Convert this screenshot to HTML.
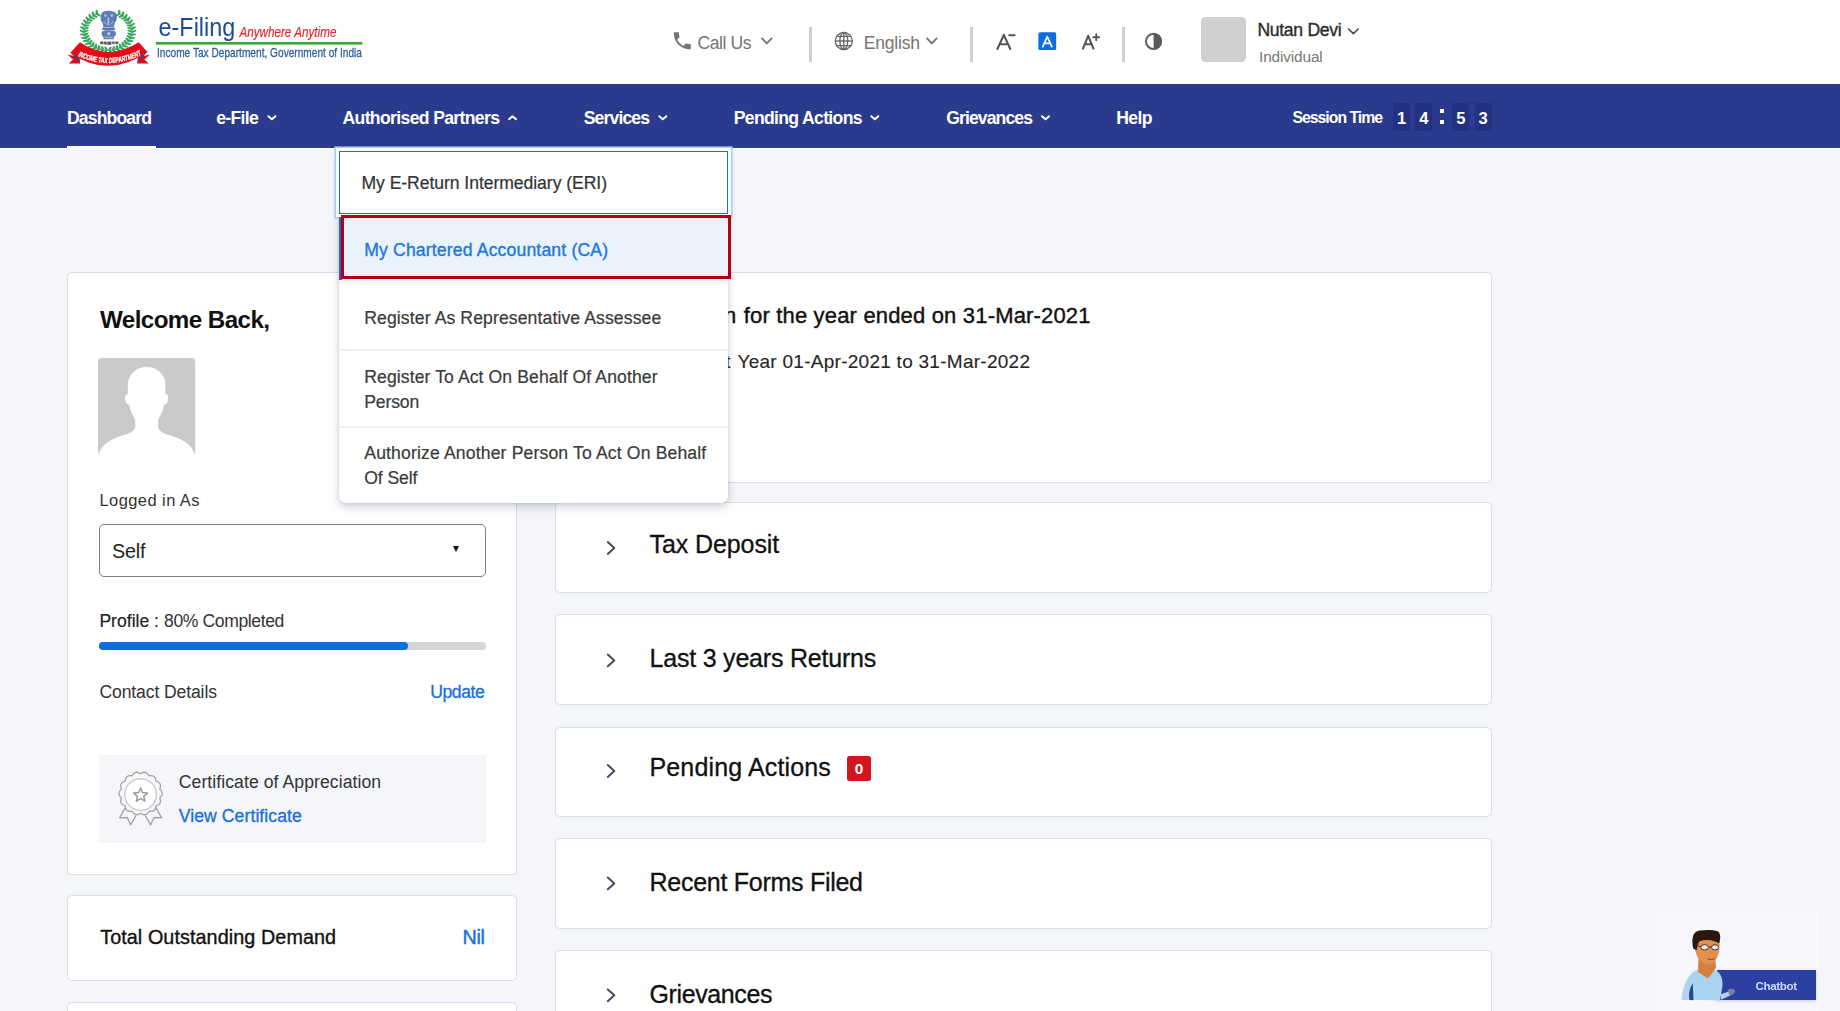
<!DOCTYPE html>
<html lang="en">
<head>
<meta charset="utf-8">
<title>e-Filing Dashboard</title>
<style>
*{box-sizing:border-box;margin:0;padding:0}
html,body{width:1840px;height:1011px;overflow:hidden}
body{position:relative;background:#f5f6fa;font-family:"Liberation Sans",sans-serif;color:#333}
.t{position:absolute;white-space:nowrap;line-height:1;font-family:"Liberation Sans",sans-serif}
.abs{position:absolute}
#hdr{position:absolute;left:0;top:0;width:1840px;height:84px;background:#fff}
#nav{position:absolute;left:0;top:84px;width:1840px;height:63.8px;background:#2a3b8d}
.vdiv{position:absolute;top:27px;width:2.6px;height:35px;background:#cfcfcf}
.card{position:absolute;background:#fff;border:1.7px solid #dadbeb;border-radius:4.5px}
.digit{position:absolute;top:103.4px;width:17px;height:27.5px;background:#233180;border-radius:1px;color:#fff;font-weight:700;font-size:16.6px;line-height:31.8px;text-align:center;overflow:hidden}
svg{position:absolute;overflow:visible}
</style>
</head>
<body>

<!-- ================= HEADER ================= -->
<div id="hdr"></div>

<svg style="left:0;top:0" width="400" height="84" viewBox="0 0 400 84">
  <defs>
    <path id="ribtxt" d="M76.6 55.2 Q108 71.2 142.5 54.4"/>
    <filter id="lb" x="-10%" y="-10%" width="120%" height="120%"><feGaussianBlur stdDeviation="0.55"/></filter>
    <filter id="lb3" x="-5%" y="-20%" width="110%" height="140%"><feGaussianBlur stdDeviation="0.32"/></filter>
    <filter id="lb2" x="-10%" y="-10%" width="120%" height="120%"><feGaussianBlur stdDeviation="0.7"/></filter>
  </defs>
  <g filter="url(#lb)">
  <!-- wreath -->
  <g transform="translate(108 0) scale(1.235 1) translate(-108 0)">
  <g fill="#1f9b4a" opacity="0.9"><ellipse cx="100.15" cy="14.81" rx="1.0" ry="2.3" transform="rotate(-54.0 100.15 14.81)"/><ellipse cx="98.84" cy="12.12" rx="1.0" ry="2.3" transform="rotate(2.0 98.84 12.12)"/><ellipse cx="97.66" cy="16.29" rx="1.0" ry="2.3" transform="rotate(-63.3 97.66 16.29)"/><ellipse cx="95.92" cy="13.84" rx="1.0" ry="2.3" transform="rotate(-7.3 95.92 13.84)"/><ellipse cx="95.43" cy="18.15" rx="1.0" ry="2.3" transform="rotate(-72.6 95.43 18.15)"/><ellipse cx="93.33" cy="16.02" rx="1.0" ry="2.3" transform="rotate(-16.6 93.33 16.02)"/><ellipse cx="93.54" cy="20.35" rx="1.0" ry="2.3" transform="rotate(-81.9 93.54 20.35)"/><ellipse cx="91.11" cy="18.59" rx="1.0" ry="2.3" transform="rotate(-25.9 91.11 18.59)"/><ellipse cx="92.02" cy="22.83" rx="1.0" ry="2.3" transform="rotate(-91.2 92.02 22.83)"/><ellipse cx="89.34" cy="21.48" rx="1.0" ry="2.3" transform="rotate(-35.2 89.34 21.48)"/><ellipse cx="90.93" cy="25.52" rx="1.0" ry="2.3" transform="rotate(-100.5 90.93 25.52)"/><ellipse cx="88.07" cy="24.62" rx="1.0" ry="2.3" transform="rotate(-44.5 88.07 24.62)"/><ellipse cx="90.28" cy="28.35" rx="1.0" ry="2.3" transform="rotate(-109.8 90.28 28.35)"/><ellipse cx="87.31" cy="27.92" rx="1.0" ry="2.3" transform="rotate(-53.8 87.31 27.92)"/><ellipse cx="90.10" cy="31.24" rx="1.0" ry="2.3" transform="rotate(-119.1 90.10 31.24)"/><ellipse cx="87.10" cy="31.30" rx="1.0" ry="2.3" transform="rotate(-63.1 87.10 31.30)"/><ellipse cx="90.39" cy="34.13" rx="1.0" ry="2.3" transform="rotate(-128.4 90.39 34.13)"/><ellipse cx="87.44" cy="34.67" rx="1.0" ry="2.3" transform="rotate(-72.4 87.44 34.67)"/><ellipse cx="91.15" cy="36.93" rx="1.0" ry="2.3" transform="rotate(-137.7 91.15 36.93)"/><ellipse cx="88.32" cy="37.95" rx="1.0" ry="2.3" transform="rotate(-81.7 88.32 37.95)"/><ellipse cx="92.34" cy="39.58" rx="1.0" ry="2.3" transform="rotate(-147.0 92.34 39.58)"/><ellipse cx="89.72" cy="41.03" rx="1.0" ry="2.3" transform="rotate(-91.0 89.72 41.03)"/><ellipse cx="93.95" cy="41.99" rx="1.0" ry="2.3" transform="rotate(-156.3 93.95 41.99)"/><ellipse cx="91.60" cy="43.85" rx="1.0" ry="2.3" transform="rotate(-100.3 91.60 43.85)"/><ellipse cx="95.93" cy="44.12" rx="1.0" ry="2.3" transform="rotate(-165.6 95.93 44.12)"/><ellipse cx="93.91" cy="46.33" rx="1.0" ry="2.3" transform="rotate(-109.6 93.91 46.33)"/><ellipse cx="98.22" cy="45.90" rx="1.0" ry="2.3" transform="rotate(-174.9 98.22 45.90)"/><ellipse cx="96.59" cy="48.41" rx="1.0" ry="2.3" transform="rotate(-118.9 96.59 48.41)"/><ellipse cx="100.78" cy="47.28" rx="1.0" ry="2.3" transform="rotate(-184.2 100.78 47.28)"/><ellipse cx="99.57" cy="50.02" rx="1.0" ry="2.3" transform="rotate(-128.2 99.57 50.02)"/><ellipse cx="103.52" cy="48.23" rx="1.0" ry="2.3" transform="rotate(-193.5 103.52 48.23)"/><ellipse cx="102.77" cy="51.13" rx="1.0" ry="2.3" transform="rotate(-137.5 102.77 51.13)"/><ellipse cx="106.38" cy="48.73" rx="1.0" ry="2.3" transform="rotate(-202.8 106.38 48.73)"/><ellipse cx="106.11" cy="51.71" rx="1.0" ry="2.3" transform="rotate(-146.8 106.11 51.71)"/><ellipse cx="115.85" cy="14.81" rx="1.0" ry="2.3" transform="rotate(54.0 115.85 14.81)"/><ellipse cx="117.16" cy="12.12" rx="1.0" ry="2.3" transform="rotate(-2.0 117.16 12.12)"/><ellipse cx="118.34" cy="16.29" rx="1.0" ry="2.3" transform="rotate(63.3 118.34 16.29)"/><ellipse cx="120.08" cy="13.84" rx="1.0" ry="2.3" transform="rotate(7.3 120.08 13.84)"/><ellipse cx="120.57" cy="18.15" rx="1.0" ry="2.3" transform="rotate(72.6 120.57 18.15)"/><ellipse cx="122.67" cy="16.02" rx="1.0" ry="2.3" transform="rotate(16.6 122.67 16.02)"/><ellipse cx="122.46" cy="20.35" rx="1.0" ry="2.3" transform="rotate(81.9 122.46 20.35)"/><ellipse cx="124.89" cy="18.59" rx="1.0" ry="2.3" transform="rotate(25.9 124.89 18.59)"/><ellipse cx="123.98" cy="22.83" rx="1.0" ry="2.3" transform="rotate(91.2 123.98 22.83)"/><ellipse cx="126.66" cy="21.48" rx="1.0" ry="2.3" transform="rotate(35.2 126.66 21.48)"/><ellipse cx="125.07" cy="25.52" rx="1.0" ry="2.3" transform="rotate(100.5 125.07 25.52)"/><ellipse cx="127.93" cy="24.62" rx="1.0" ry="2.3" transform="rotate(44.5 127.93 24.62)"/><ellipse cx="125.72" cy="28.35" rx="1.0" ry="2.3" transform="rotate(109.8 125.72 28.35)"/><ellipse cx="128.69" cy="27.92" rx="1.0" ry="2.3" transform="rotate(53.8 128.69 27.92)"/><ellipse cx="125.90" cy="31.24" rx="1.0" ry="2.3" transform="rotate(119.1 125.90 31.24)"/><ellipse cx="128.90" cy="31.30" rx="1.0" ry="2.3" transform="rotate(63.1 128.90 31.30)"/><ellipse cx="125.61" cy="34.13" rx="1.0" ry="2.3" transform="rotate(128.4 125.61 34.13)"/><ellipse cx="128.56" cy="34.67" rx="1.0" ry="2.3" transform="rotate(72.4 128.56 34.67)"/><ellipse cx="124.85" cy="36.93" rx="1.0" ry="2.3" transform="rotate(137.7 124.85 36.93)"/><ellipse cx="127.68" cy="37.95" rx="1.0" ry="2.3" transform="rotate(81.7 127.68 37.95)"/><ellipse cx="123.66" cy="39.58" rx="1.0" ry="2.3" transform="rotate(147.0 123.66 39.58)"/><ellipse cx="126.28" cy="41.03" rx="1.0" ry="2.3" transform="rotate(91.0 126.28 41.03)"/><ellipse cx="122.05" cy="41.99" rx="1.0" ry="2.3" transform="rotate(156.3 122.05 41.99)"/><ellipse cx="124.40" cy="43.85" rx="1.0" ry="2.3" transform="rotate(100.3 124.40 43.85)"/><ellipse cx="120.07" cy="44.12" rx="1.0" ry="2.3" transform="rotate(165.6 120.07 44.12)"/><ellipse cx="122.09" cy="46.33" rx="1.0" ry="2.3" transform="rotate(109.6 122.09 46.33)"/><ellipse cx="117.78" cy="45.90" rx="1.0" ry="2.3" transform="rotate(174.9 117.78 45.90)"/><ellipse cx="119.41" cy="48.41" rx="1.0" ry="2.3" transform="rotate(118.9 119.41 48.41)"/><ellipse cx="115.22" cy="47.28" rx="1.0" ry="2.3" transform="rotate(184.2 115.22 47.28)"/><ellipse cx="116.43" cy="50.02" rx="1.0" ry="2.3" transform="rotate(128.2 116.43 50.02)"/><ellipse cx="112.48" cy="48.23" rx="1.0" ry="2.3" transform="rotate(193.5 112.48 48.23)"/><ellipse cx="113.23" cy="51.13" rx="1.0" ry="2.3" transform="rotate(137.5 113.23 51.13)"/><ellipse cx="109.62" cy="48.73" rx="1.0" ry="2.3" transform="rotate(202.8 109.62 48.73)"/><ellipse cx="109.89" cy="51.71" rx="1.0" ry="2.3" transform="rotate(146.8 109.89 51.71)"/></g>
  <circle cx="108.0" cy="30.9" r="19.4" fill="none" stroke="#2aa455" stroke-width="1.6" stroke-dasharray="104.3 17.6" stroke-dashoffset="-8.8" transform="rotate(-90 108.0 30.9)" opacity="0.6"/>
  </g>
  </g>
  <!-- emblem (lion capital, impressionistic) -->
  <g filter="url(#lb2)" fill="#4464a6">
    <path d="M101.2 14 C102 11.6 105 10.8 108.4 10.8 C112 10.8 115.4 11.8 116.4 14.2 C117.6 17.5 116.6 21.2 114.6 23.4 L114 27 L103.4 27 L102.8 23.4 C100.6 21.2 100 17.4 101.2 14 Z" opacity="0.85"/>
    <rect x="102.4" y="27.4" width="12.6" height="2.6" rx="0.8" opacity="0.9"/>
    <path d="M101.6 33.2 C101.6 30.6 104.5 30.2 108.6 30.2 C112.8 30.2 116 30.8 116 33.4 C116 35.6 114.8 36.2 114.2 36.4 L113.6 39.2 L103.8 39.2 L103.2 36.4 C102.4 36.2 101.6 35.4 101.6 33.2 Z" opacity="0.85"/>
    <g fill="#fff" opacity="0.55">
      <circle cx="105.4" cy="15.6" r="1.3"/><circle cx="111.8" cy="15.6" r="1.3"/><rect x="107.6" y="17.5" width="1.6" height="8" />
      <circle cx="108.8" cy="33.6" r="1.7"/><rect x="104.5" y="36.8" width="8.4" height="0.9"/>
      <path d="M103.6 21 L106.6 24.5 M113.6 21 L110.8 24.5" stroke="#fff" stroke-width="0.9"/>
    </g>
  </g>
  <rect x="100.2" y="41.6" width="18.2" height="3.2" fill="#1a1a1a" opacity="0.75" filter="url(#lb2)"/>
  <g fill="#fff" opacity="0.8"><rect x="103.3" y="41.4" width="0.8" height="3.6"/><rect x="106.6" y="41.4" width="0.9" height="3.6"/><rect x="111.2" y="41.4" width="1" height="3.6"/><rect x="114.6" y="41.4" width="0.8" height="3.6"/><rect x="100" y="44" width="5" height="1.2"/><rect x="112" y="43.8" width="7" height="1.3"/></g>
  <!-- ribbon -->
  <g filter="url(#lb)">
    <path d="M67.4 54.6 L79.6 57.2 L80.2 63.4 L68.8 63.4 L73 59.4 Z" fill="#e20a17"/>
    <path d="M149.9 54.6 L137.8 57.2 L137.2 63.4 L148.6 63.4 L144.4 59.4 Z" fill="#e20a17"/>
    <path d="M70.6 52.6 L80.2 63.4 L76.6 55.4 Z" fill="#1f4f9c"/>
    <path d="M147.2 52 L137.2 63.4 L141.2 55 Z" fill="#1f4f9c"/>
    <path d="M79.9 42.3 Q108 61.5 138.7 42.3 L147.5 51.9 Q108 79.4 70.4 52.7 Z" fill="#e20a17"/>
  </g>
  <text font-family="Liberation Sans, sans-serif" font-size="7.4" font-weight="700" font-style="italic" fill="#fff" stroke="#fff" stroke-width="0.25" letter-spacing="0" filter="url(#lb)"><textPath href="#ribtxt" startOffset="1.5" textLength="66" lengthAdjust="spacingAndGlyphs">INCOME TAX DEPARTMENT</textPath></text>
  <!-- wordmark -->
  <text x="158.6" y="36.3" font-family="Liberation Sans, sans-serif" font-size="26" fill="#1b4c9c" filter="url(#lb3)" textLength="76.6" lengthAdjust="spacingAndGlyphs">e-Filing</text>
  <text x="239.4" y="36.9" font-family="Liberation Sans, sans-serif" font-size="15.4" font-style="italic" fill="#e8202a" stroke="#e8202a" stroke-width="0.15" filter="url(#lb3)" textLength="97" lengthAdjust="spacingAndGlyphs">Anywhere Anytime</text>
  <rect x="156" y="42" width="206.3" height="2.6" fill="#3aa635"/>
  <text x="157" y="57.3" font-family="Liberation Sans, sans-serif" font-size="13.2" fill="#2b5f9f" stroke="#2b5f9f" stroke-width="0.3" filter="url(#lb3)" textLength="205" lengthAdjust="spacingAndGlyphs">Income Tax Department, Government of India</text>
</svg>


<svg style="left:0;top:0" width="1840" height="84" viewBox="0 0 1840 84">
  <!-- phone -->
  <g transform="translate(670.9,29.4) scale(0.948)" fill="#757575"><path d="M6.62 10.79c1.44 2.83 3.76 5.14 6.59 6.59l2.2-2.2c.27-.27.67-.36 1.02-.24 1.12.37 2.33.57 3.57.57.55 0 1 .45 1 1V20c0 .55-.45 1-1 1-9.39 0-17-7.61-17-17 0-.55.45-1 1-1h3.5c.55 0 1 .45 1 1 0 1.25.2 2.45.57 3.57.11.35.03.74-.25 1.02l-2.2 2.2z"/></g>
  <!-- chevrons -->
  <polyline points="762,38.4 766.8,43.4 771.6,38.4" fill="none" stroke="#757575" stroke-width="1.9" stroke-linecap="round" stroke-linejoin="round"/>
  <polyline points="927,38.4 931.8,43.4 936.6,38.4" fill="none" stroke="#757575" stroke-width="1.9" stroke-linecap="round" stroke-linejoin="round"/>
  <polyline points="1348.6,29 1353.4,33.6 1358.2,29" fill="none" stroke="#444" stroke-width="1.5" stroke-linecap="round" stroke-linejoin="round"/>
  <!-- globe -->
  <g fill="none" stroke="#666" stroke-width="1.35">
    <circle cx="843.8" cy="41" r="8.5"/>
    <ellipse cx="843.8" cy="41" rx="3.9" ry="8.5"/>
    <line x1="843.8" y1="32.5" x2="843.8" y2="49.5"/>
    <line x1="835.3" y1="41" x2="852.3" y2="41"/>
    <path d="M836.6 36.4 H851 M836.6 45.6 H851"/>
  </g>
  <!-- A- -->
  <g fill="none" stroke="#555" stroke-width="2.1" stroke-linejoin="round" stroke-linecap="round">
    <path d="M997.4 49 L1003.8 34.9 L1010.3 49 M999.6 44.3 H1008.1"/>
    <path d="M1009.2 35.2 H1014.6" stroke-width="1.9"/>
  </g>
  <!-- A box -->
  <rect x="1038.4" y="32.3" width="17.8" height="17.8" rx="1.6" fill="#0b6de0"/>
  <g fill="none" stroke="#fff" stroke-width="1.7" stroke-linejoin="round" stroke-linecap="round">
    <path d="M1042.8 46.6 L1047.3 36.6 L1051.8 46.6 M1044.4 43.3 H1050.2"/>
  </g>
  <!-- A+ -->
  <g fill="none" stroke="#555" stroke-width="2.1" stroke-linejoin="round" stroke-linecap="round">
    <path d="M1083 48.6 L1088.2 35.8 L1093.4 48.6 M1084.8 44.3 H1091.6"/>
    <path d="M1093.3 37.3 H1099.2 M1096.25 34.3 V40.3" stroke-width="1.9"/>
  </g>
  <!-- contrast -->
  <circle cx="1153.6" cy="41.35" r="7.6" fill="none" stroke="#5a5a5a" stroke-width="1.9"/>
  <path d="M1153.6 33.2 A8.15 8.15 0 0 1 1153.6 49.5 Z" fill="#5a5a5a"/>
</svg>

<div class="vdiv" style="left:809.3px"></div>
<div class="vdiv" style="left:970px"></div>
<div class="vdiv" style="left:1122px"></div>
<div class="abs" style="left:1201.4px;top:17.3px;width:44.6px;height:44.7px;background:#cfcfcf;border-radius:4.5px"></div>

<!-- ================= NAV ================= -->
<div id="nav"></div>
<div class="abs" style="left:0;top:147.8px;width:1840px;height:1.7px;background:#fff"></div>
<div class="abs" style="left:67px;top:146px;width:89.3px;height:2.6px;background:#fff"></div>
<svg style="left:0;top:0" width="1840" height="150" viewBox="0 0 1840 150">
<polyline points="268.4,116.25 271.9,119.15 275.4,116.25" fill="none" stroke="#fff" stroke-width="2" stroke-linecap="round" stroke-linejoin="round"/><polyline points="509.0,119.15 512.5,116.25 516.0,119.15" fill="none" stroke="#fff" stroke-width="2" stroke-linecap="round" stroke-linejoin="round"/><polyline points="659.3,116.25 662.8,119.15 666.3,116.25" fill="none" stroke="#fff" stroke-width="2" stroke-linecap="round" stroke-linejoin="round"/><polyline points="871.3,116.25 874.8,119.15 878.3,116.25" fill="none" stroke="#fff" stroke-width="2" stroke-linecap="round" stroke-linejoin="round"/><polyline points="1042.0,116.25 1045.5,119.15 1049.0,116.25" fill="none" stroke="#fff" stroke-width="2" stroke-linecap="round" stroke-linejoin="round"/>
</svg>
<div class="digit" style="left:1393px">1</div>
<div class="digit" style="left:1415.3px">4</div>
<div class="digit" style="left:1452.4px">5</div>
<div class="digit" style="left:1474.7px">3</div>
<div class="abs" style="left:1440.3px;top:109.3px;width:4.2px;height:4.2px;background:#fff"></div>
<div class="abs" style="left:1440.3px;top:119.6px;width:4.2px;height:4.2px;background:#fff"></div>

<!-- ================= LEFT COLUMN ================= -->
<div class="card" style="left:67.2px;top:272px;width:449.5px;height:602.8px"></div>
<div class="card" style="left:67.2px;top:895.3px;width:449.5px;height:85.5px"></div>
<div class="card" style="left:67.2px;top:1001.8px;width:449.5px;height:60px"></div>

<svg style="left:98.25px;top:358px" width="97.3" height="97" viewBox="0 0 97.3 97">
  <defs><clipPath id="avc"><rect x="0" y="0" width="97.3" height="97" rx="4"/></clipPath></defs>
  <rect x="0" y="0" width="97.3" height="97" rx="4" fill="#cacaca"/>
  <g clip-path="url(#avc)" fill="#fff">
    <path d="M48.6 9 C37 9 29.5 17 29.8 29 L29.9 36 C27 36.5 26.6 39.5 27.4 42.5 C28 45.5 29.5 46.5 31.2 46.7 C32.5 53 34.5 57.5 37.2 61.5 L37.2 68 C37.2 72 34 74.5 28 76.5 C14 80.5 3.5 85.5 0.5 97 L96.8 97 C93.8 85.5 83.3 80.5 69.3 76.5 C63.3 74.5 60.1 72 60.1 68 L60.1 61.5 C62.8 57.5 64.8 53 66.1 46.7 C67.8 46.5 69.3 45.5 69.9 42.5 C70.7 39.5 70.3 36.5 67.4 36 L67.5 29 C67.8 17 60.3 9 48.6 9 Z"/>
  </g>
</svg>

<div class="abs" style="left:98.6px;top:523.7px;width:387px;height:53.8px;border:1.3px solid #7b7b7b;border-radius:5px;background:#fff"></div>
<div class="abs" style="left:453px;top:545.8px;width:0;height:0;border-left:3.9px solid transparent;border-right:3.9px solid transparent;border-top:6.4px solid #111"></div>
<div class="abs" style="left:98.5px;top:641.9px;width:387px;height:8.5px;border-radius:4.3px;background:#d5d5d5"></div>
<div class="abs" style="left:98.5px;top:641.9px;width:309.7px;height:8.5px;border-radius:4.3px;background:#0b6de0"></div>
<div class="abs" style="left:98.8px;top:754.7px;width:387px;height:88.5px;background:#f5f6fa"></div>

<svg style="left:0;top:0" width="600" height="900" viewBox="0 0 600 900">
  <g fill="none" stroke="#a3a3a3" stroke-width="1.3" stroke-linejoin="round">
    <path d="M125.4 807.5 L119.6 817.9 L127.3 817.5 L130.6 824.9 L135.9 815.6" fill="#f5f6fa"/>
    <path d="M155.8 807.5 L161.7 817.9 L154 817.5 L150.6 824.9 L145.3 815.6" fill="#f5f6fa"/>
    <path d="M140.60 773.80 Q145.99 769.91 149.15 775.75 Q155.69 774.58 156.00 781.22 Q162.40 783.00 159.81 789.12 Q164.80 793.50 159.81 797.88 Q162.40 804.00 156.00 805.78 Q155.69 812.42 149.15 811.25 Q145.99 817.09 140.60 813.20 Q135.21 817.09 132.05 811.25 Q125.51 812.42 125.20 805.78 Q118.80 804.00 121.39 797.88 Q116.40 793.50 121.39 789.12 Q118.80 783.00 125.20 781.22 Q125.51 774.58 132.05 775.75 Q135.21 769.91 140.60 773.80 Z" fill="#f7f8fb"/>
    <circle cx="140.6" cy="794.5" r="15.8" fill="#fff" stroke="#cdcdcd" stroke-width="1.5"/>
    <polygon points="140.60,788.10 142.60,792.55 147.45,793.08 143.83,796.35 144.83,801.12 140.60,798.70 136.37,801.12 137.37,796.35 133.75,793.08 138.60,792.55 " stroke-width="1.5" stroke="#9c9c9c"/>
  </g>
</svg>


<!-- ================= RIGHT COLUMN ================= -->
<div class="card" style="left:554.8px;top:272px;width:937px;height:210.9px"></div>
<div class="card" style="left:554.8px;top:501.6px;width:937px;height:91.4px"></div>
<div class="card" style="left:554.8px;top:614.2px;width:937px;height:91.2px"></div>
<div class="card" style="left:554.8px;top:726.5px;width:937px;height:90.3px"></div>
<div class="card" style="left:554.8px;top:838px;width:937px;height:91.2px"></div>
<div class="card" style="left:554.8px;top:950.4px;width:937px;height:91.2px"></div>
<svg style="left:0;top:0" width="1840" height="1011" viewBox="0 0 1840 1011">
<polyline points="607.8,542.1 614.3,548 607.8,553.9" fill="none" stroke="#474a5c" stroke-width="2" stroke-linecap="round" stroke-linejoin="round"/><polyline points="607.8,654.5 614.3,660.4 607.8,666.3" fill="none" stroke="#474a5c" stroke-width="2" stroke-linecap="round" stroke-linejoin="round"/><polyline points="607.8,765.1 614.3,771 607.8,776.9" fill="none" stroke="#474a5c" stroke-width="2" stroke-linecap="round" stroke-linejoin="round"/><polyline points="607.8,877.5 614.3,883.4 607.8,889.3" fill="none" stroke="#474a5c" stroke-width="2" stroke-linecap="round" stroke-linejoin="round"/><polyline points="607.8,989.4 614.3,995.3 607.8,1001.1999999999999" fill="none" stroke="#474a5c" stroke-width="2" stroke-linecap="round" stroke-linejoin="round"/>
</svg>
<div class="abs" style="left:846.7px;top:756.2px;width:24.6px;height:25px;background:#d0161f;border-radius:2.5px;color:#fff;font-weight:700;font-size:15.4px;line-height:25.6px;text-align:center">0</div>

<!-- ================= DROPDOWN ================= -->
<div class="abs" style="left:339.2px;top:147.6px;width:388.6px;height:355px;background:#fff;border-radius:0 0 7px 7px;box-shadow:0 4px 10px rgba(40,50,90,.22),0 0 3px rgba(40,50,90,.12);z-index:20"></div>
<div class="abs" style="left:339.2px;top:349.3px;width:388.6px;height:1.3px;background:#f0f1f7;z-index:21"></div>
<div class="abs" style="left:339.2px;top:426.4px;width:388.6px;height:1.3px;background:#f0f1f7;z-index:21"></div>
<div class="abs" style="left:339.2px;top:279px;width:388.6px;height:5px;background:#f5f6fa;z-index:21"></div>
<!-- focused first item -->
<div class="abs" style="left:338.8px;top:151.4px;width:389.2px;height:62.4px;background:#fff;border:1.5px solid #1273e2;border-radius:0;box-shadow:0 0 0 3px #fff,0 0 0 4.6px #a9cdf3;z-index:22"></div>
<!-- highlighted second item -->
<div class="abs" style="left:339.2px;top:217px;width:3px;height:63.4px;background:#0b6de0;z-index:22"></div>
<div class="abs" style="left:340.8px;top:215px;width:390px;height:64px;background:#eaf2fc;border:3px solid #b8000c;z-index:23"></div>

<!-- ================= CHATBOT ================= -->

<div class="abs" style="left:1652px;top:912px;width:166px;height:99px;background:rgba(255,255,255,.2)"></div>
<div class="abs" style="left:1816.6px;top:912px;width:1.6px;height:99px;background:rgba(255,255,255,.7)"></div>
<div class="abs" style="left:1716.6px;top:969.6px;width:99.4px;height:30.6px;background:#2b40a0;box-shadow:0 1px 3px rgba(60,70,160,.25)"></div>
<span class="t" style="left:1755.4px;top:980.2px;font-size:11.6px;font-weight:700;color:#cfd8ff;letter-spacing:-0.35px;filter:blur(.35px)">Chatbot</span>
<svg style="left:0;top:0;filter:blur(.6px)" width="1840" height="1011" viewBox="0 0 1840 1011">
  <!-- body -->
  <path d="M1681.5 999.6 C1683 986 1688 973 1697.5 969.5 L1714 969.8 C1720.5 972 1722.8 978 1722.5 986 L1720 1000.4 Z" fill="#a8d4ef"/>
  <path d="M1689 1000 C1688.5 993 1690 987 1692.8 983.5 L1693.5 1000.3 Z" fill="#23478f"/>
  <path d="M1681.5 999.6 C1682 992 1684 985.5 1687 981 L1689.5 1000 Z" fill="#b9d0f3"/>
  <path d="M1720.6 994.3 L1729 991.6 L1731 995 L1721.2 999.8 Z" fill="#b9d0f3"/>
  <path d="M1727.5 990.2 C1730 988.2 1733.6 988.6 1735 990.4 C1735.4 993 1732.8 995 1729.6 995.4 Z" fill="#7d7f9f"/>
  <!-- neck/face -->
  <path d="M1698.5 958 L1698 972 L1708 978.5 L1716 968 L1715.2 958 Z" fill="#d77f3f"/>
  <path d="M1694.6 944 C1694.6 934.5 1699 930.8 1707 930.8 C1715 930.8 1719.6 935 1719.6 944 C1719.6 955.5 1715.5 963.8 1709 964.2 C1700.5 964.2 1694.6 956 1694.6 944 Z" fill="#e0904f"/>
  <!-- hair -->
  <path d="M1693.2 948.5 C1691.2 938 1692.8 931.8 1699.5 930.6 C1705.5 929.6 1713 929.8 1717.8 931.2 C1721.2 934 1720.6 939.5 1719 943.5 C1714.5 940 1706 939 1699.6 941.2 C1697.6 943.5 1697.4 947 1696.6 950.2 Z" fill="#2a1712"/>
  <!-- glasses -->
  <g fill="#f3e6de" stroke="#3a2a22" stroke-width="0.9">
    <ellipse cx="1704.6" cy="947.3" rx="3.9" ry="2.7"/>
    <ellipse cx="1715" cy="947.3" rx="3.5" ry="2.6"/>
  </g>
  <path d="M1708.5 947 H1711.5 M1700.7 946.6 L1696 945.2" stroke="#3a2a22" stroke-width="0.9" fill="none"/>
  <path d="M1707.5 958.6 C1710 960 1713 959.8 1714.6 958.4" stroke="#8d3f22" stroke-width="1" fill="none"/>
</svg>


<span class="t" style="left:697.50px;top:35.20px;font-size:17.6px;font-weight:400;color:#757575;letter-spacing:-0.451px;">Call Us</span>
<span class="t" style="left:863.75px;top:35.20px;font-size:17.6px;font-weight:400;color:#757575;letter-spacing:-0.245px;">English</span>
<span class="t" style="left:1257.40px;top:22.20px;font-size:17.6px;font-weight:400;color:#2b2b2b;letter-spacing:-0.305px;-webkit-text-stroke:0.35px #2b2b2b;">Nutan Devi</span>
<span class="t" style="left:1259.00px;top:48.80px;font-size:15.4px;font-weight:400;color:#777;letter-spacing:-0.137px;">Individual</span>
<span class="t" style="left:67.00px;top:110.20px;font-size:17.6px;font-weight:700;color:#fff;letter-spacing:-0.863px;">Dashboard</span>
<span class="t" style="left:216.25px;top:110.20px;font-size:17.6px;font-weight:700;color:#fff;letter-spacing:-0.691px;">e-File</span>
<span class="t" style="left:342.50px;top:110.20px;font-size:17.6px;font-weight:700;color:#fff;letter-spacing:-0.647px;">Authorised Partners</span>
<span class="t" style="left:583.75px;top:110.20px;font-size:17.6px;font-weight:700;color:#fff;letter-spacing:-0.879px;">Services</span>
<span class="t" style="left:733.75px;top:110.20px;font-size:17.6px;font-weight:700;color:#fff;letter-spacing:-0.672px;">Pending Actions</span>
<span class="t" style="left:946.25px;top:110.20px;font-size:17.6px;font-weight:700;color:#fff;letter-spacing:-0.905px;">Grievances</span>
<span class="t" style="left:1116.25px;top:110.20px;font-size:17.6px;font-weight:700;color:#fff;letter-spacing:-0.630px;">Help</span>
<span class="t" style="left:1292.50px;top:109.60px;font-size:15.8px;font-weight:700;color:#fff;letter-spacing:-1.006px;">Session Time</span>
<span class="t" style="left:100.00px;top:308.40px;font-size:24.2px;font-weight:700;color:#111;letter-spacing:-0.585px;">Welcome Back,</span>
<span class="t" style="left:99.50px;top:491.75px;font-size:16.5px;font-weight:400;color:#333;letter-spacing:0.416px;">Logged in As</span>
<span class="t" style="left:112.00px;top:542.10px;font-size:19.8px;font-weight:400;color:#222;letter-spacing:-0.198px;">Self</span>
<span class="t" style="left:99.40px;top:613.20px;font-size:17.6px;font-weight:400;color:#222;letter-spacing:-0.007px;-webkit-text-stroke:0.18px #222;">Profile :</span>
<span class="t" style="left:164.00px;top:613.20px;font-size:17.6px;font-weight:400;color:#333;letter-spacing:-0.407px;">80% Completed</span>
<span class="t" style="left:99.40px;top:684.20px;font-size:17.6px;font-weight:400;color:#333;letter-spacing:-0.122px;">Contact Details</span>
<span class="t" style="left:430.20px;top:684.20px;font-size:17.6px;font-weight:400;color:#1a6edb;letter-spacing:-0.427px;-webkit-text-stroke:0.3px #1a6edb;">Update</span>
<span class="t" style="left:178.75px;top:774.20px;font-size:17.6px;font-weight:400;color:#333;letter-spacing:0.072px;">Certificate of Appreciation</span>
<span class="t" style="left:178.75px;top:808.20px;font-size:17.6px;font-weight:400;color:#1a6edb;letter-spacing:0.076px;-webkit-text-stroke:0.3px #1a6edb;">View Certificate</span>
<span class="t" style="left:100.20px;top:928.10px;font-size:19.8px;font-weight:400;color:#111;letter-spacing:0.073px;-webkit-text-stroke:0.35px #111;">Total Outstanding Demand</span>
<span class="t" style="left:462.60px;top:928.10px;font-size:19.8px;font-weight:400;color:#1a6edb;letter-spacing:-0.389px;-webkit-text-stroke:0.45px #1a6edb;">Nil</span>
<span class="t" style="left:649.50px;top:531.50px;font-size:25px;font-weight:400;color:#111;letter-spacing:-0.087px;-webkit-text-stroke:0.3px #111;">Tax Deposit</span>
<span class="t" style="left:649.50px;top:645.50px;font-size:25px;font-weight:400;color:#111;letter-spacing:-0.206px;-webkit-text-stroke:0.3px #111;">Last 3 years Returns</span>
<span class="t" style="left:649.50px;top:754.50px;font-size:25px;font-weight:400;color:#111;letter-spacing:0.140px;-webkit-text-stroke:0.3px #111;">Pending Actions</span>
<span class="t" style="left:649.50px;top:869.50px;font-size:25px;font-weight:400;color:#111;letter-spacing:-0.272px;-webkit-text-stroke:0.3px #111;">Recent Forms Filed</span>
<span class="t" style="left:649.50px;top:981.50px;font-size:25px;font-weight:400;color:#111;letter-spacing:-0.384px;-webkit-text-stroke:0.3px #111;">Grievances</span>
<span class="t" style="left:743.75px;top:304.50px;font-size:22px;font-weight:400;color:#111;letter-spacing:0.173px;-webkit-text-stroke:0.4px #111;">for the year ended on 31-Mar-2021</span>
<span class="t" style="left:737.50px;top:352.00px;font-size:19px;font-weight:400;color:#262626;letter-spacing:0.267px;-webkit-text-stroke:0.12px #262626;">Year 01-Apr-2021 to 31-Mar-2022</span>
<span class="t" style="left:590.00px;top:304.50px;font-size:22px;font-weight:400;color:#111;letter-spacing:-0.110px;-webkit-text-stroke:0.4px #111;">File your return</span>
<span class="t" style="left:606.00px;top:352.00px;font-size:19px;font-weight:400;color:#262626;letter-spacing:-0.894px;-webkit-text-stroke:0.12px #262626;">For Assessment</span>
<span class="t" style="left:361.50px;top:175.20px;font-size:17.6px;font-weight:400;color:#333;letter-spacing:-0.064px;-webkit-text-stroke:0.2px #333;z-index:30;">My E-Return Intermediary (ERI)</span>
<span class="t" style="left:364.25px;top:242.20px;font-size:17.6px;font-weight:400;color:#1b78e2;letter-spacing:0.155px;-webkit-text-stroke:0.35px #1b78e2;z-index:30;">My Chartered Accountant (CA)</span>
<span class="t" style="left:364.25px;top:310.20px;font-size:17.6px;font-weight:400;color:#3a3a3a;letter-spacing:0.106px;-webkit-text-stroke:0.2px #3a3a3a;z-index:30;">Register As Representative Assessee</span>
<span class="t" style="left:364.25px;top:369.20px;font-size:17.6px;font-weight:400;color:#3a3a3a;letter-spacing:0.089px;-webkit-text-stroke:0.2px #3a3a3a;z-index:30;">Register To Act On Behalf Of Another</span>
<span class="t" style="left:364.25px;top:394.20px;font-size:17.6px;font-weight:400;color:#3a3a3a;letter-spacing:-0.150px;-webkit-text-stroke:0.2px #3a3a3a;z-index:30;">Person</span>
<span class="t" style="left:364.25px;top:445.20px;font-size:17.6px;font-weight:400;color:#3a3a3a;letter-spacing:0.147px;-webkit-text-stroke:0.2px #3a3a3a;z-index:30;">Authorize Another Person To Act On Behalf</span>
<span class="t" style="left:364.25px;top:470.20px;font-size:17.6px;font-weight:400;color:#3a3a3a;letter-spacing:-0.089px;-webkit-text-stroke:0.2px #3a3a3a;z-index:30;">Of Self</span>
</body>
</html>
